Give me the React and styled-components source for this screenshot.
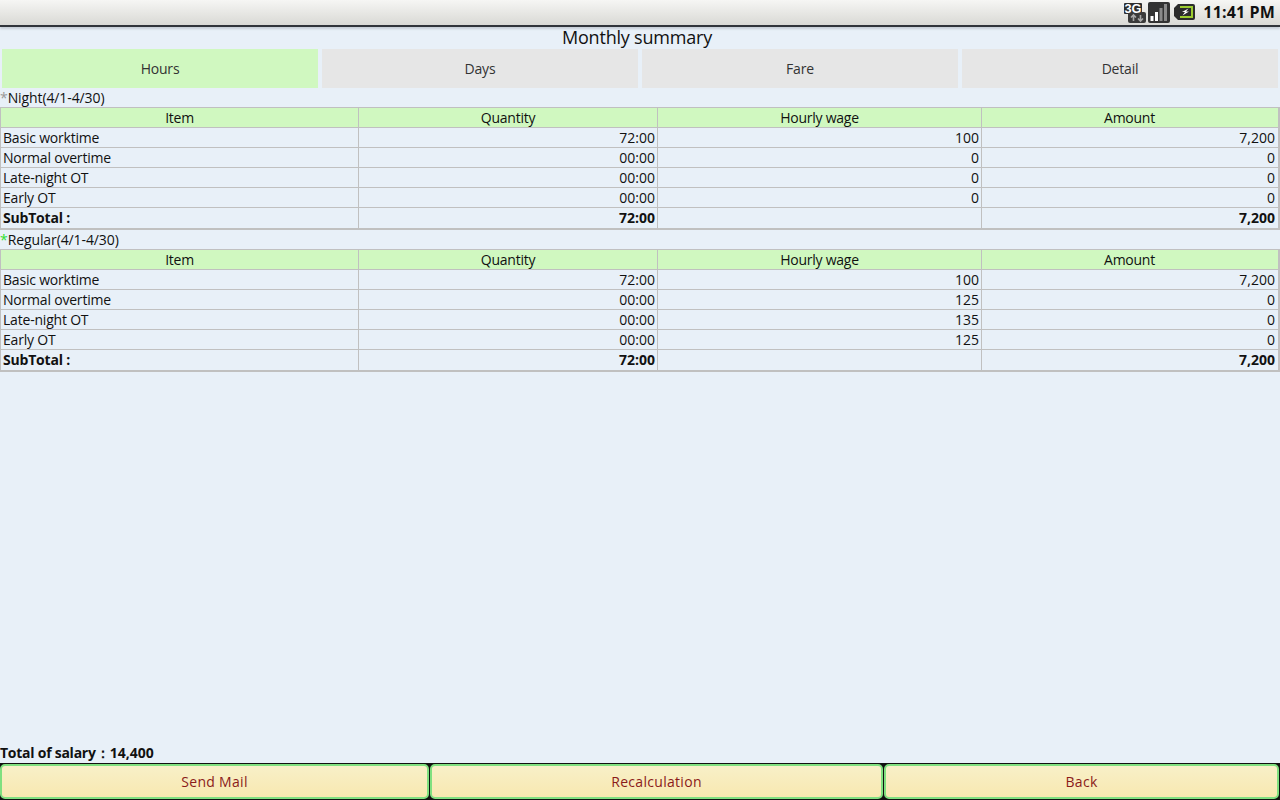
import React from 'react';
import styled, { createGlobalStyle } from 'styled-components';

const GlobalStyle = createGlobalStyle`
  html, body { margin: 0; padding: 0; height: 100%; }
  body { font-family: "Open Sans", "DejaVu Sans", sans-serif; background: #e8f0f8; overflow: hidden; }
  #root { height: 100%; }
`;

const Screen = styled.div`
  width: 1280px;
  height: 800px;
  display: flex;
  flex-direction: column;
  background: #e8f0f8;
  color: #111;
`;

const StatusBar = styled.div`
  height: 27px;
  flex: none;
  display: flex;
  align-items: center;
  justify-content: flex-end;
  padding: 0 5px 1px 0;
  box-sizing: border-box;
  background: linear-gradient(#f6f6f4, #d9d9d5);
  border-bottom: 2px solid #30343a;
  box-shadow: 0 2px 2px #c6ced6;
`;

const IconSlot = styled.div`
  display: flex;
  margin-right: ${(p) => p.$gap}px;
`;

const Clock = styled.span`
  font-size: 16px;
  font-weight: 700;
  color: #111;
  letter-spacing: 0.15px;
`;

const Title = styled.div`
  height: 22px;
  flex: none;
  font-size: 18px;
  line-height: 20px;
  letter-spacing: -0.2px;
  text-align: center;
  padding-right: 6px;
`;

const Tabs = styled.div`
  flex: none;
  display: grid;
  grid-template-columns: repeat(4, 1fr);
  gap: 4px;
  padding: 0 2px;
  height: 39px;
`;

const Tab = styled.div`
  display: flex;
  align-items: center;
  justify-content: center;
  font-size: 14px;
  letter-spacing: -0.2px;
  color: #333;
  background: ${(p) => (p.$active ? '#d0f8c0' : '#e6e6e6')};
`;

const Section = styled.div`
  flex: none;
`;

const SectionLabel = styled.div`
  height: 19px;
  line-height: 20px;
  font-size: 14px;
  letter-spacing: -0.1px;
  white-space: nowrap;
`;

const Star = styled.span`
  color: ${(p) => p.$color};
`;

const Table = styled.div`
  border-top: 1px solid #c0c0c0;
  border-bottom: 2px solid #c0c0c0;
  border-right: 2px solid #c0c0c0;
`;

const Row = styled.div`
  display: grid;
  grid-template-columns: 358px 299px 324px 1fr;
  height: 20px;
  box-sizing: border-box;
  border-bottom: 1px solid #c0c0c0;
  font-size: 14px;
  line-height: 19px;
  font-weight: ${(p) => (p.$bold ? 700 : 400)};
  background: ${(p) => (p.$head ? '#d0f8c0' : 'transparent')};
  &:last-child { border-bottom: 0; }
`;

const Cell = styled.div`
  padding: 0 2px;
  box-sizing: border-box;
  border-left: 1px solid #c0c0c0;
  white-space: nowrap;
  &:last-child { padding-right: 3px; }
`;

const HeadCell = styled(Cell)`
  text-align: center;
  letter-spacing: -0.25px;
`;

const LabelCell = styled(Cell)`
  letter-spacing: -0.2px;
`;

const NumCell = styled(Cell)`
  text-align: right;
`;

const Spacer = styled.div`
  flex: 1;
`;

const Total = styled.div`
  flex: none;
  height: 19px;
  line-height: 17px;
  font-size: 14px;
  font-weight: 700;
  white-space: pre;
`;

const TotalLabel = styled.span`
  letter-spacing: -0.25px;
`;

const Buttons = styled.div`
  flex: none;
  display: grid;
  grid-template-columns: 430px 454px 1fr;
  height: 37px;
  box-sizing: border-box;
  padding: 1px 0;
  background: #111;
`;

const Button = styled.button`
  all: unset;
  display: flex;
  align-items: center;
  justify-content: center;
  box-sizing: border-box;
  margin-right: 1px;
  border: 2px solid #80e080;
  border-radius: 5px;
  background: linear-gradient(#f8f0c8, #f8e8b0);
  color: #8b1a1a;
  font-size: 14px;
  letter-spacing: 0.3px;
`;

const columns = ['Item', 'Quantity', 'Hourly wage', 'Amount'];

const sections = [
  {
    name: 'Night(4/1-4/30)',
    star: '#999999',
    rows: [
      ['Basic worktime', '72:00', '100', '7,200'],
      ['Normal overtime', '00:00', '0', '0'],
      ['Late-night OT', '00:00', '0', '0'],
      ['Early OT', '00:00', '0', '0'],
    ],
  },
  {
    name: 'Regular(4/1-4/30)',
    star: '#30e030',
    rows: [
      ['Basic worktime', '72:00', '100', '7,200'],
      ['Normal overtime', '00:00', '125', '0'],
      ['Late-night OT', '00:00', '135', '0'],
      ['Early OT', '00:00', '125', '0'],
    ],
  },
];

const NetworkIcon = () => (
  <svg width="22" height="21" viewBox="0 0 22 21">
    <rect x="0" y="1" width="18" height="11" rx="1" fill="#2e2e2e" />
    <rect x="4" y="10" width="18" height="11" rx="2" fill="#3a3a3a" />
    <text x="0.500" y="11" fontFamily="Liberation Sans, sans-serif" fontSize="12" fontWeight="700" fill="#fff" textLength="17" lengthAdjust="spacingAndGlyphs">3G</text>
    <path d="M9.500 19v-6M7 15.500l2.500-2.500 2.500 2.500" stroke="#a8a8a8" strokeWidth="1.600" fill="none" />
    <path d="M16.500 13v6M14 16.500l2.500 2.500 2.500-2.500" stroke="#a8a8a8" strokeWidth="1.600" fill="none" />
  </svg>
);

const SignalIcon = () => (
  <svg width="22" height="21" viewBox="0 0 22 21">
    <rect x="0" y="0" width="22" height="21" rx="2" fill="#333" />
    <rect x="2.500" y="14" width="3" height="5" fill="#fff" />
    <rect x="7" y="10" width="3" height="9" fill="#fff" />
    <rect x="11.500" y="6" width="3" height="13" fill="#8a8a8a" />
    <rect x="16" y="2" width="3" height="17" fill="#8a8a8a" />
  </svg>
);

const BatteryIcon = () => (
  <svg width="21" height="16" viewBox="0 0 21 16">
    <path d="M4 0h15a2 2 0 0 1 2 2v12a2 2 0 0 1-2 2H4L0 12V4z" fill="#2c2c2c" />
    <path d="M6 3h12v10H6" fill="none" stroke="#9ccc30" strokeWidth="2" />
    <path d="M14.500 4.500L8 8h3l-2.500 3.500L15 7.500h-3z" fill="#fff" />
  </svg>
);

function App() {
  return (
    <Screen>
      <GlobalStyle />
      <StatusBar>
        <IconSlot $gap={2}><NetworkIcon /></IconSlot>
        <IconSlot $gap={4}><SignalIcon /></IconSlot>
        <IconSlot $gap={8}><BatteryIcon /></IconSlot>
        <Clock>11:41 PM</Clock>
      </StatusBar>
      <Title>Monthly summary</Title>
      <Tabs>
        <Tab $active>Hours</Tab>
        <Tab>Days</Tab>
        <Tab>Fare</Tab>
        <Tab>Detail</Tab>
      </Tabs>
      {sections.map((s) => (
        <Section key={s.name}>
          <SectionLabel>
            <Star $color={s.star}>*</Star>
            {s.name}
          </SectionLabel>
          <Table>
            <Row $head>
              {columns.map((c) => (
                <HeadCell key={c}>{c}</HeadCell>
              ))}
            </Row>
            {s.rows.map((r) => (
              <Row key={r[0]}>
                <LabelCell>{r[0]}</LabelCell>
                <NumCell>{r[1]}</NumCell>
                <NumCell>{r[2]}</NumCell>
                <NumCell>{r[3]}</NumCell>
              </Row>
            ))}
            <Row $bold>
              <LabelCell>SubTotal :</LabelCell>
              <NumCell>72:00</NumCell>
              <NumCell></NumCell>
              <NumCell>7,200</NumCell>
            </Row>
          </Table>
        </Section>
      ))}
      <Spacer />
      <Total><TotalLabel>Total of salary</TotalLabel>：14,400</Total>
      <Buttons>
        <Button>Send Mail</Button>
        <Button>Recalculation</Button>
        <Button>Back</Button>
      </Buttons>
    </Screen>
  );
}

export default App;
